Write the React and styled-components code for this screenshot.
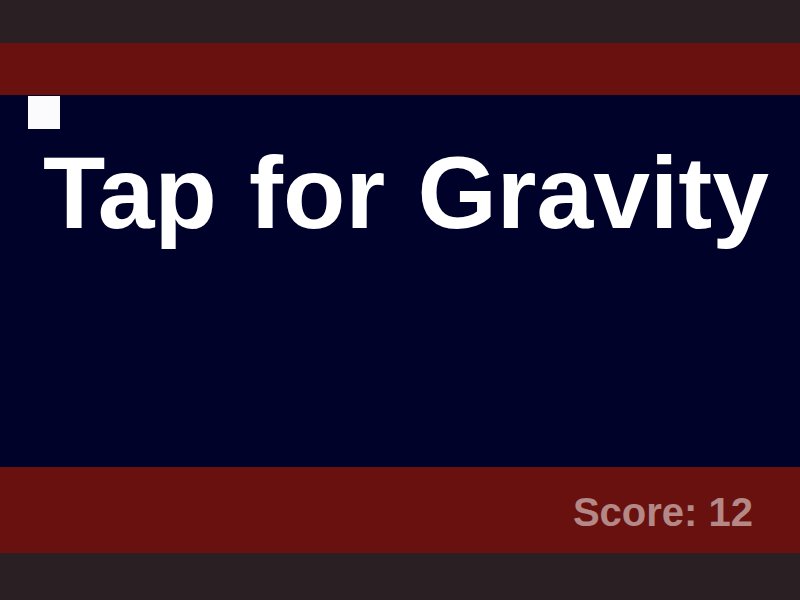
import React from "react";
import styled, { createGlobalStyle } from "styled-components";

const Global = createGlobalStyle`
*{
  box-sizing: border-box;
}
html, body{
  margin: 0;
  padding: 0;
  background: #2a1f23;
  font-family: "Liberation Sans", Arial, sans-serif;
}
`

const Screen = styled.div`
width: 800px;
height: 600px;
display: flex;
flex-direction: column;
background: #2a1f23;
overflow: hidden;
`

const Gap = styled.div`
height: ${props => props.h}px;
background: #2a1f23;
flex-shrink: 0;
`

const Band = styled.div`
height: ${props => props.h}px;
background: #68110e;
flex-shrink: 0;
display: flex;
align-items: center;
justify-content: flex-end;
padding: 5px 47px 0 0;
`

const Field = styled.div`
flex: 1;
background: #00022a;
position: relative;
padding-left: 43px;
`

const Player = styled.div`
position: absolute;
left: 28px;
top: 1px;
width: 32px;
height: 33px;
background: #fbfbfd;
`

const Title = styled.h1`
margin: 47px 0 0 0;
font-size: 102px;
font-weight: 700;
line-height: 1;
word-spacing: 4px;
color: #ffffff;
white-space: nowrap;
`

const Score = styled.div`
font-size: 40px;
font-weight: 700;
color: rgba(255, 255, 255, 0.5);
`

function App() {
  const [score] = React.useState(12);
  return (
    <Screen>
      <Global />
      <Gap h={43} />
      <Band h={52} />
      <Field>
        <Player />
        <Title>Tap for Gravity</Title>
      </Field>
      <Band h={86}>
        <Score>Score: {score}</Score>
      </Band>
      <Gap h={47} />
    </Screen>
  );
}

export default App;
